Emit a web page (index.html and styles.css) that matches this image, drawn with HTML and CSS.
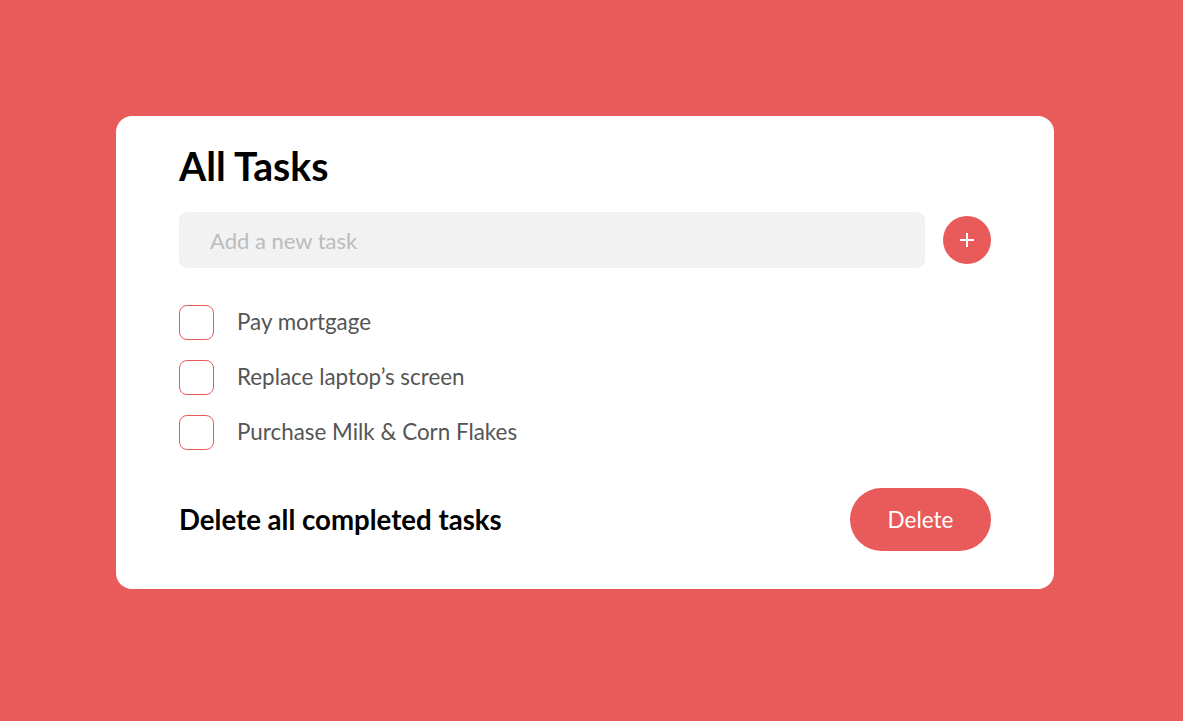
FILE: index.html
```html
<!DOCTYPE html>
<html>
<head>
<meta charset="utf-8">
<link rel="stylesheet" href="styles.css">
</head>
<body>
<main class="card">
  <h1 class="title">All Tasks</h1>
  <div class="add-row">
    <input class="add-input" type="text" placeholder="Add a new task">
    <button class="add-btn" aria-label="Add">
      <svg width="16" height="16" viewBox="0 0 16 16"><path d="M8 1v14M1 8h14" stroke="#fff" stroke-width="2" fill="none"/></svg>
    </button>
  </div>
  <ul class="tasks">
    <li class="task"><span class="check"></span><span class="task-text">Pay mortgage</span></li>
    <li class="task"><span class="check"></span><span class="task-text">Replace laptop’s screen</span></li>
    <li class="task"><span class="check"></span><span class="task-text">Purchase Milk &amp; Corn Flakes</span></li>
  </ul>
  <div class="footer">
    <span class="footer-text">Delete all completed tasks</span>
    <button class="delete-btn">Delete</button>
  </div>
</main>
</body>
</html>
```
FILE: styles.css
```css
html, body {
  margin: 0;
  padding: 0;
}
body {
  background: #e95a5a;
  font-family: Lato, "Open Sans", sans-serif;
  min-height: 721px;
  padding-top: 116px;
  box-sizing: border-box;
}
.card {
  width: 938px;
  box-sizing: border-box;
  margin-left: 116px;
  background: #fff;
  border-radius: 16px;
  padding: 28px 63px 38px;
}
.title {
  margin: 0;
  font-size: 39.2px;
  font-weight: 700;
  line-height: 44px;
  color: #000;
}
.add-row {
  display: flex;
  align-items: center;
  gap: 18px;
  margin-top: 24px;
}
.add-input {
  flex: 1;
  height: 56px;
  box-sizing: border-box;
  border: none;
  border-radius: 8px;
  background: #f2f2f2;
  padding: 0 31px;
  font-family: Lato, sans-serif;
  font-size: 22px;
  outline: none;
}
.add-input::placeholder {
  color: #bcbcbc;
}
.add-btn {
  width: 48px;
  height: 48px;
  border-radius: 50%;
  border: none;
  background: #e95a5a;
  display: flex;
  align-items: center;
  justify-content: center;
  padding: 0;
}
.tasks {
  list-style: none;
  margin: 37px 0 0;
  padding: 0;
  display: flex;
  flex-direction: column;
  gap: 20px;
}
.task {
  display: flex;
  align-items: center;
  gap: 23px;
}
.check {
  width: 35px;
  height: 35px;
  box-sizing: border-box;
  border: 1px solid #e95a5a;
  border-radius: 8px;
}
.task-text {
  font-size: 22.4px;
  color: #555;
  line-height: 26px;
  margin-top: -1px;
}
.footer {
  display: flex;
  justify-content: space-between;
  align-items: center;
  margin-top: 38px;
}
.footer-text {
  font-size: 27.6px;
  font-weight: 700;
  color: #000;
}
.delete-btn {
  width: 141px;
  height: 63px;
  border: none;
  border-radius: 32px;
  background: #e95a5a;
  color: #fff;
  font-family: Lato, sans-serif;
  font-size: 22.5px;
}
```
